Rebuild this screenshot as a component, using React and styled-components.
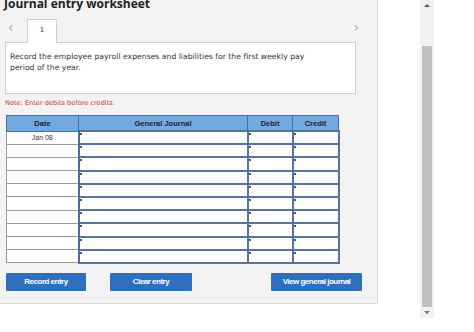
import React from "react";
import styled, { createGlobalStyle } from "styled-components";

const Global = createGlobalStyle`
  html, body { margin: 0; padding: 0; background: #fff; }
  body { overflow: hidden; }
`;

const Page = styled.div`
  display: flex;
  align-items: flex-start;
  width: 474px;
  height: 332px;
  overflow: hidden;
`;

const Panel = styled.div`
  width: 378px;
  height: 304px;
  background: #f3f3f3;
  border-right: 1px solid #dcdcdc;
  border-bottom: 1px solid #dcdcdc;
  box-sizing: border-box;
  display: flex;
  flex-direction: column;
  padding: 0 0 0 5px;
  font-family: "DejaVu Sans", Verdana, sans-serif;
`;

const Title = styled.h1`
  margin: -2px 0 0 -1px;
  height: 12px;
  font-family: "Open Sans", "DejaVu Sans", sans-serif;
  font-size: 12px;
  line-height: 12px;
  font-weight: bold;
  color: #222;
  white-space: nowrap;
`;

const TabRow = styled.div`
  display: flex;
  align-items: flex-start;
  height: 23px;
  margin-top: 9px;
  position: relative;
  z-index: 1;
`;

const Arrow = styled.span`
  width: 22px;
  padding-left: 3px;
  box-sizing: border-box;
  font-size: 14px;
  line-height: 16px;
  color: #aaa;
`;

const Tab = styled.div`
  width: 30px;
  height: 24px;
  box-sizing: border-box;
  background: #fff;
  border: 1px solid #cfcfcf;
  border-bottom: none;
  font-size: 7px;
  text-align: center;
  padding-top: 6px;
  color: #333;
`;

const NextArrow = styled.span`
  margin-left: auto;
  margin-right: 18px;
  font-size: 14px;
  line-height: 16px;
  color: #aaa;
`;

const Prompt = styled.div`
  width: 351px;
  height: 52px;
  box-sizing: border-box;
  background: #fff;
  border: 1px solid #cfcfcf;
  padding: 8px 4px;
  font-size: 7.7px;
  line-height: 11px;
  color: #333;
`;

const Note = styled.div`
  margin-top: 4px;
  font-size: 6.6px;
  line-height: 10px;
  color: #c0392b;
`;

const Table = styled.table`
  margin-top: 7px;
  margin-left: 1px;
  border-collapse: collapse;
  table-layout: fixed;
  width: 328px;
  font-family: "Liberation Sans", Arial, sans-serif;
`;

const Th = styled.th`
  height: 14px;
  padding: 0;
  background: #71a9e0;
  border: 1px solid #4d6e9a;
  font-size: 7.5px;
  font-weight: bold;
  color: #223;
  width: ${(p) => p.$w}px;
`;

const DateCell = styled.td`
  height: 11.2px;
  padding: 0;
  border: 1px solid #9a9a9a;
  border-right: 2px solid #4d6e9a;
  background: #fff;
  font-size: 7px;
  text-align: center;
  color: #333;
  line-height: 11px;
`;

const InputCell = styled.td`
  height: 11.2px;
  padding: 0;
  border: 2px solid #56739c;
  background: #fff;
  position: relative;
  &::before {
    content: "";
    position: absolute;
    left: 0;
    top: 1px;
    width: 2px;
    height: 2px;
    background: #2b5fa8;
  }
`;

const Buttons = styled.div`
  display: flex;
  margin-top: 9px;
  margin-left: 1px;
  width: 357px;
`;

const Button = styled.button`
  height: 18px;
  width: ${(p) => p.$w}px;
  margin-left: ${(p) => p.$ml || 0}px;
  border: none;
  border-radius: 1px;
  background: #2f70be;
  color: #fff;
  font-family: "Liberation Sans", Arial, sans-serif;
  font-weight: bold;
  font-size: 8px;
  letter-spacing: -0.5px;
  padding: 0;
`;

const Scroll = styled.div`
  margin-left: 42px;
  width: 14px;
  height: 318px;
  background: #f1f1f1;
  display: flex;
  flex-direction: column;
  align-items: center;
`;

const ScrollArrow = styled.div`
  width: 0;
  height: 0;
  border-left: 3px solid transparent;
  border-right: 3px solid transparent;
  ${(p) =>
    p.$down
      ? "border-top: 3px solid #777; margin-top: 4px;"
      : "border-bottom: 3px solid #555; margin-top: 4px;"}
`;

const Thumb = styled.div`
  width: 10px;
  margin-top: 39px;
  height: 261px;
  background: #c1c1c1;
`;

const rows = Array.from({ length: 10 }, (_, i) => (i === 0 ? "Jan 08" : ""));

export default function App() {
  return (
    <Page>
      <Global />
      <Panel>
        <Title>Journal entry worksheet</Title>
        <TabRow>
          <Arrow>&lsaquo;</Arrow>
          <Tab>1</Tab>
          <NextArrow>&rsaquo;</NextArrow>
        </TabRow>
        <Prompt>
          Record the employee payroll expenses and liabilities for the first weekly pay
          <br />
          period of the year.
        </Prompt>
        <Note>Note: Enter debits before credits.</Note>
        <Table>
          <thead>
            <tr>
              <Th $w={71}>Date</Th>
              <Th $w={168}>General Journal</Th>
              <Th $w={44}>Debit</Th>
              <Th $w={45}>Credit</Th>
            </tr>
          </thead>
          <tbody>
            {rows.map((d, i) => (
              <tr key={i}>
                <DateCell>{d}</DateCell>
                <InputCell />
                <InputCell />
                <InputCell />
              </tr>
            ))}
          </tbody>
        </Table>
        <Buttons>
          <Button $w={80}>Record entry</Button>
          <Button $w={82} $ml={24}>Clear entry</Button>
          <Button $w={91} $ml={79}>View general journal</Button>
        </Buttons>
      </Panel>
      <Scroll>
        <ScrollArrow />
        <Thumb />
        <ScrollArrow $down />
      </Scroll>
    </Page>
  );
}
